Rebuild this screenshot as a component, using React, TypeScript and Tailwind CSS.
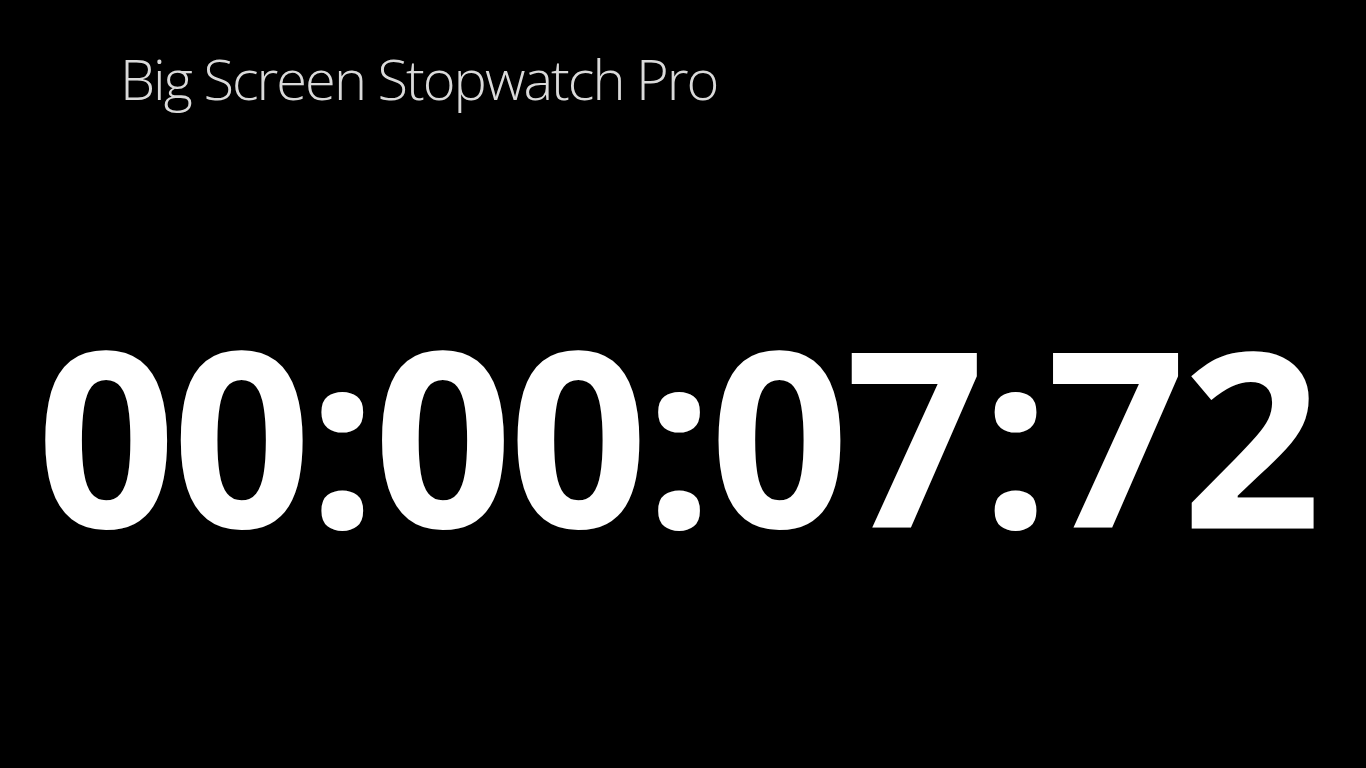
export default function App() {
  return (
    <div className="min-h-[768px] w-full overflow-hidden bg-black" style={{ fontFamily: '"Open Sans", "Noto Sans", sans-serif' }}>
      <h1 className="pl-[120px] pt-[50px] text-[56px] font-light leading-[56px] tracking-[-2px] text-[#dadada]">
        Big Screen Stopwatch Pro
      </h1>
      <div className="mt-[205px] pr-[12px] text-center text-[244px] font-bold leading-[244px] tracking-[-4px] whitespace-nowrap text-white">
        00:00:07:72
      </div>
    </div>
  )
}
